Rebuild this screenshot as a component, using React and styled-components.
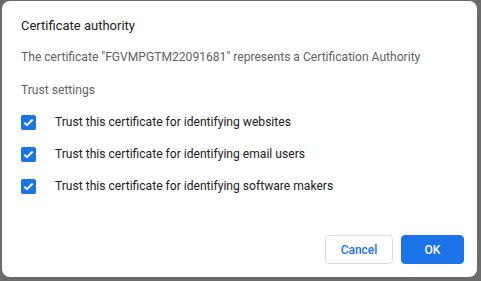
import React from "react";
import styled, { createGlobalStyle } from "styled-components";

const Global = createGlobalStyle`
  html, body { margin: 0; padding: 0; background: #6b6b6b; }
  body { width: 481px; height: 281px; overflow: hidden; font-family: Roboto, "Noto Sans", sans-serif; }
`;

const Page = styled.div`
  width: 481px;
  height: 281px;
  padding: 1px 4px 4px 2px;
  box-sizing: border-box;
  display: flex;
`;

const Dialog = styled.div`
  flex: 1;
  background: #fff;
  border-radius: 8px;
  display: flex;
  flex-direction: column;
  padding: 0 13px 13px 19px;
  box-sizing: border-box;
`;

const Title = styled.h1`
  margin: 16px 0 0;
  font-size: 13px;
  font-weight: 400;
  line-height: 18px;
  color: #202124;
`;

const Text = styled.p`
  margin: ${(p) => p.$top}px 0 0;
  font-size: 12.1px;
  line-height: 16px;
  color: #5f6368;
`;

const List = styled.div`
  display: flex;
  flex-direction: column;
  gap: 16px;
  margin-top: 16px;
`;

const Row = styled.label`
  display: flex;
  align-items: center;
  height: 16px;
  gap: 19px;
`;

const Box = styled.span`
  width: 15px;
  height: 15px;
  border-radius: 2px;
  background: #1a73e8;
  display: flex;
  align-items: center;
  justify-content: center;
  flex: none;
`;

const Label = styled.span`
  font-size: 12.1px;
  line-height: 16px;
  color: #202124;
`;

const Footer = styled.div`
  margin-top: auto;
  display: flex;
  justify-content: flex-end;
  gap: 8px;
`;

const Button = styled.button`
  height: 29px;
  width: ${(p) => p.$w}px;
  border-radius: 4px;
  font-family: Roboto, "Noto Sans", sans-serif;
  font-size: 12px;
  font-weight: 500;
  border: 1px solid ${(p) => (p.$primary ? "#1a73e8" : "#dadce0")};
  background: ${(p) => (p.$primary ? "#1a73e8" : "#fff")};
  color: ${(p) => (p.$primary ? "#fff" : "#1a73e8")};
  padding: 0;
`;

const Check = () => (
  <svg width="11" height="9" viewBox="0 0 11 9">
    <path d="M1.3 4.6 L4 7.2 L9.7 1.5" fill="none" stroke="#fff" strokeWidth="1.8" />
  </svg>
);

const items = [
  "Trust this certificate for identifying websites",
  "Trust this certificate for identifying email users",
  "Trust this certificate for identifying software makers",
];

export default function App() {
  return (
    <>
      <Global />
      <Page>
        <Dialog>
          <Title>Certificate authority</Title>
          <Text $top={14}>The certificate "FGVMPGTM22091681" represents a Certification Authority</Text>
          <Text $top={17}>Trust settings</Text>
          <List>
            {items.map((t) => (
              <Row key={t}>
                <Box>
                  <Check />
                </Box>
                <Label>{t}</Label>
              </Row>
            ))}
          </List>
          <Footer>
            <Button $w={68}>Cancel</Button>
            <Button $w={63} $primary>OK</Button>
          </Footer>
        </Dialog>
      </Page>
    </>
  );
}
